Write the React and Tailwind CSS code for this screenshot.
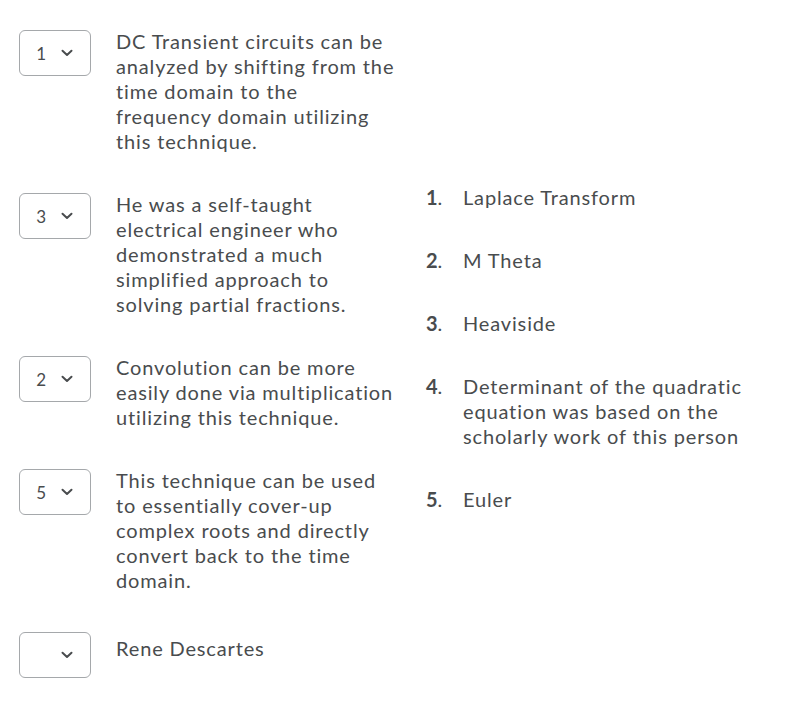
import React from "react";

const left = [
  { v: "1", t: "DC Transient circuits can be analyzed by shifting from the time domain to the frequency domain utilizing this technique." },
  { v: "3", t: "He was a self-taught electrical engineer who demonstrated a much simplified approach to solving partial fractions." },
  { v: "2", t: "Convolution can be more easily done via multiplication utilizing this technique." },
  { v: "5", t: "This technique can be used to essentially cover-up complex roots and directly convert back to the time domain." },
  { v: "", t: "Rene Descartes" },
];

const right = [
  "Laplace Transform",
  "M Theta",
  "Heaviside",
  "Determinant of the quadratic equation was based on the scholarly work of this person",
  "Euler",
];

function Chevron() {
  return (
    <svg width="12" height="8" viewBox="0 0 12 8" fill="none">
      <path d="M1.5 1.8 L6 6 L10.5 1.8" stroke="#494c4e" strokeWidth="2" strokeLinecap="round" strokeLinejoin="round" />
    </svg>
  );
}

export default function App() {
  return (
    <div className="bg-white w-[792px] h-[702px] text-[#494c4e] text-[20px] leading-[25px] tracking-[0.85px]" style={{ fontFamily: "Lato, 'Noto Sans', sans-serif" }}>
      <div className="flex pt-[30px] pl-[19px]">
        <div className="flex flex-col gap-[39px] w-[380px]">
          {left.map((r, i) => (
            <div key={i} className="flex items-start">
              <div className="w-[72px] h-[46px] shrink-0 border border-[#a5a8ab] rounded-[6px] flex items-center justify-end pr-[17px] gap-[15px] text-[17px] tracking-normal">
                {r.v && <span>{r.v}</span>}
                <Chevron />
              </div>
              <div className={r.v ? "ml-[25px] w-[288px] -mt-[1px]" : "ml-[25px] w-[288px] mt-[4px]"}>{r.t}</div>
            </div>
          ))}
        </div>
        <div className="flex flex-col gap-[38px] pt-[155px] ml-[27px]">
          {right.map((t, i) => (
            <div key={i} className="flex">
              <div className="w-[37px] shrink-0 tracking-normal"><span className="font-bold">{i + 1}</span>.</div>
              <div className="w-[290px]">{t}</div>
            </div>
          ))}
        </div>
      </div>
    </div>
  );
}
